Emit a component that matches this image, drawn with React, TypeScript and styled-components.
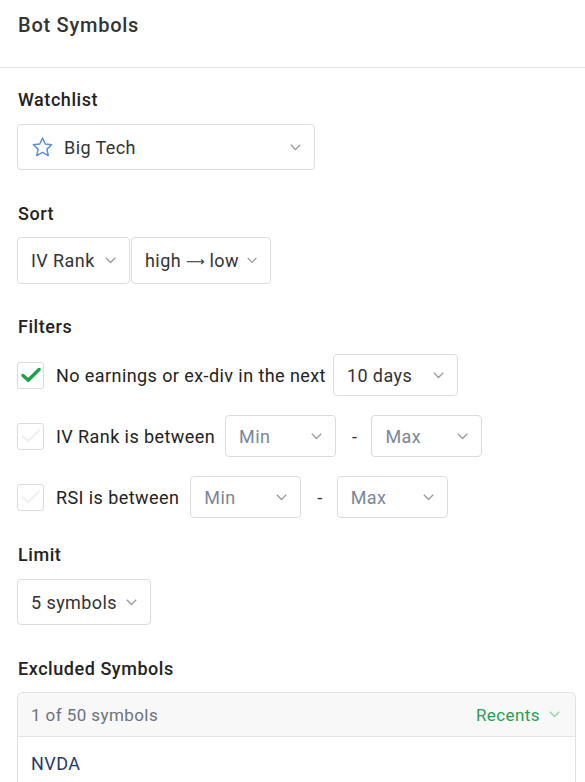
import React from "react";
import styled, { createGlobalStyle } from "styled-components";

const Global = createGlobalStyle`
  html, body { margin: 0; padding: 0; background: #fff; }
  body { font-family: Roboto, "Noto Sans", "Liberation Sans", sans-serif; color: #222; letter-spacing: 0.42px; }
  * { box-sizing: border-box; }
`;

const Page = styled.div`
  width: 585px;
  min-height: 782px;
  background: #fff;
`;

const Header = styled.div`
  height: 68px;
  display: flex;
  align-items: center;
  padding: 0 18px 18px;
  border-bottom: 1px solid #e3e3e3;
`;

const Title = styled.h1`
  margin: 0;
  font-size: 20px;
  font-weight: 500;
  color: #333;
  line-height: 24px;
  letter-spacing: 0.75px;
`;

const Body = styled.div`
  padding: 20px 9px 0 17px;
  display: flex;
  flex-direction: column;
`;

const Section = styled.section<{ $gap?: number }>`
  display: flex;
  flex-direction: column;
  align-items: flex-start;
  margin-bottom: ${(p) => p.$gap ?? 32}px;
`;

const Label = styled.div<{ $mb?: number }>`
  font-size: 18px;
  font-weight: 500;
  line-height: 24px;
  color: #222;
  letter-spacing: 0.55px;
  margin: 0 0 ${(p) => p.$mb ?? 12}px 1px;
`;

const Select = styled.div<{ $w?: number; $h?: number; $placeholder?: boolean }>`
  display: flex;
  align-items: center;
  justify-content: space-between;
  gap: 8px;
  width: ${(p) => (p.$w ? `${p.$w}px` : "auto")};
  height: ${(p) => p.$h ?? 46}px;
  padding: 0 13px 0 13px;
  border: 1px solid #dcdcdc;
  border-radius: 4px;
  background: #fff;
  font-size: 18px;
  white-space: nowrap;
  color: ${(p) => (p.$placeholder ? "#7b8794" : "#333")};
  flex-shrink: 0;
`;

const Lead = styled.span`
  display: flex;
  align-items: center;
  gap: 10px;
`;

const Arrow = styled.span`
  font-family: "DejaVu Sans", sans-serif;
  font-size: 13px;
  letter-spacing: 0;
  vertical-align: 1px;
`;

const SortRow = styled.div`
  display: flex;
  gap: 1px;
`;

const FilterRow = styled.div`
  display: flex;
  align-items: center;
  height: 42px;
  margin-bottom: 19px;
  &:last-child { margin-bottom: 0; }
`;

const Check = styled.span`
  width: 27px;
  height: 27px;
  border: 1px solid #dcdcdc;
  border-radius: 3px;
  display: flex;
  align-items: center;
  justify-content: center;
  margin-right: 12px;
  flex-shrink: 0;
`;

const RowText = styled.span<{ $mr?: number }>`
  font-size: 18px;
  color: #222;
  margin-right: ${(p) => p.$mr ?? 10}px;
  white-space: nowrap;
`;

const Dash = styled.span`
  font-size: 18px;
  color: #333;
  margin: 0 14px 0 16px;
`;

const Box = styled.div`
  width: 559px;
  border: 1px solid #e0e0e0;
  border-bottom: none;
  border-radius: 6px 6px 0 0;
  overflow: hidden;
`;

const BoxHead = styled.div`
  height: 44px;
  display: flex;
  align-items: center;
  justify-content: space-between;
  padding: 0 15px 0 13px;
  background: #f8f8f8;
  border-bottom: 1px solid #e5e5e5;
  font-size: 17px;
`;

const Count = styled.span`
  color: #6b7280;
`;

const Recents = styled.span`
  display: flex;
  align-items: center;
  gap: 9px;
  color: #2a9d55;
`;

const SymbolRow = styled.div`
  height: 52px;
  display: flex;
  align-items: center;
  padding: 0 13px;
  font-size: 18px;
  color: #1f3b6b;
`;

const Chevron = ({ color = "#9a9a9a" }: { color?: string }) => (
  <svg width="11" height="7" viewBox="0 0 11 7" fill="none">
    <path d="M0.8 0.8 L5.5 5.5 L10.2 0.8" stroke={color} strokeWidth="1.3" />
  </svg>
);

const Star = () => (
  <svg width="23" height="23" viewBox="0 0 24 24" fill="none">
    <path
      d="M12 2.2 L14.9 8.4 L21.6 9.1 L16.6 13.7 L18 20.4 L12 17 L6 20.4 L7.4 13.7 L2.4 9.1 L9.1 8.4 Z"
      stroke="#5a8fd2"
      strokeWidth="1.5"
      strokeLinejoin="round"
    />
  </svg>
);

const CheckMark = ({ on }: { on: boolean }) => (
  <svg width="20" height="16" viewBox="0 0 20 16" fill="none">
    <path
      d="M2 8.5 L7.2 13.2 L18 2.5"
      stroke={on ? "#19a34a" : "#f0f0f0"}
      strokeWidth={on ? 3.4 : 2.4}
      strokeLinecap="round"
      strokeLinejoin="round"
    />
  </svg>
);

export default function App() {
  return (
    <Page>
      <Global />
      <Header>
        <Title>Bot Symbols</Title>
      </Header>
      <Body>
        <Section>
          <Label>Watchlist</Label>
          <Select $w={298}>
            <Lead>
              <Star />
              Big Tech
            </Lead>
            <Chevron />
          </Select>
        </Section>

        <Section $gap={31}>
          <Label $mb={11}>Sort</Label>
          <SortRow>
            <Select $w={113} $h={47}>
              IV Rank
              <Chevron />
            </Select>
            <Select $w={140} $h={47}>
              <span>
                high <Arrow>⟶</Arrow> low
              </span>
              <Chevron />
            </Select>
          </SortRow>
        </Section>

        <Section $gap={25}>
          <Label $mb={15}>Filters</Label>
          <FilterRow>
            <Check>
              <CheckMark on />
            </Check>
            <RowText $mr={7}>No earnings or ex-div in the next</RowText>
            <Select $w={125} $h={42}>
              10 days
              <Chevron />
            </Select>
          </FilterRow>
          <FilterRow>
            <Check>
              <CheckMark on={false} />
            </Check>
            <RowText>IV Rank is between</RowText>
            <Select $w={111} $h={42} $placeholder>
              Min
              <Chevron />
            </Select>
            <Dash>-</Dash>
            <Select $w={111} $h={42} $placeholder>
              Max
              <Chevron />
            </Select>
          </FilterRow>
          <FilterRow>
            <Check>
              <CheckMark on={false} />
            </Check>
            <RowText $mr={11}>RSI is between</RowText>
            <Select $w={111} $h={42} $placeholder>
              Min
              <Chevron />
            </Select>
            <Dash>-</Dash>
            <Select $w={111} $h={42} $placeholder>
              Max
              <Chevron />
            </Select>
          </FilterRow>
        </Section>

        <Section>
          <Label>Limit</Label>
          <Select $w={134}>
            5 symbols
            <Chevron />
          </Select>
        </Section>

        <Section $gap={0}>
          <Label $mb={11}>Excluded Symbols</Label>
          <Box>
            <BoxHead>
              <Count>1 of 50 symbols</Count>
              <Recents>
                Recents
                <Chevron color="#8fd1a6" />
              </Recents>
            </BoxHead>
            <SymbolRow>NVDA</SymbolRow>
          </Box>
        </Section>
      </Body>
    </Page>
  );
}
